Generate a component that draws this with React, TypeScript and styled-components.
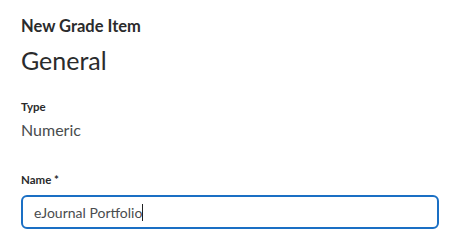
import React from "react";
import styled, { createGlobalStyle } from "styled-components";

const Global = createGlobalStyle`
  html, body { margin: 0; padding: 0; background: #fff; }
  body { font-family: Lato, "Open Sans", sans-serif; color: #202122; }
`;

const Page = styled.div`
  padding: 16px 35px 0 21px;
  display: flex;
  flex-direction: column;
`;

const Heading = styled.h1`
  margin: 0;
  font-size: 16.5px;
  font-weight: 700;
  line-height: 20px;
  color: #2a2b2c;
`;

const Section = styled.h2`
  margin: 9px 0 0;
  font-size: 25px;
  font-weight: 400;
  line-height: 30px;
  color: #2a2b2c;
`;

const Label = styled.div<{ $top: number }>`
  margin-top: ${(p) => p.$top}px;
  font-size: 11.5px;
  font-weight: 700;
  line-height: 14px;
  color: #2a2b2c;
`;

const Value = styled.div`
  margin-top: 6px;
  font-size: 16px;
  line-height: 20px;
  color: #494c4e;
`;

const Input = styled.div`
  margin-top: 8px;
  box-sizing: border-box;
  height: 34px;
  border: 2px solid #1a6fc4;
  border-radius: 6px;
  padding: 0 11px;
  display: flex;
  align-items: center;
  font-size: 14px;
  color: #494c4e;
`;

const Caret = styled.span`
  display: inline-block;
  width: 1px;
  height: 17px;
  background: #202122;
  margin-left: 0;
  vertical-align: middle;
`;

export default function App() {
  return (
    <>
      <Global />
      <Page>
        <Heading>New Grade Item</Heading>
        <Section>General</Section>
        <Label $top={25}>Type</Label>
        <Value>Numeric</Value>
        <Label $top={33}>Name *</Label>
        <Input>
          <span>eJournal Portfolio</span>
          <Caret />
        </Input>
      </Page>
    </>
  );
}
